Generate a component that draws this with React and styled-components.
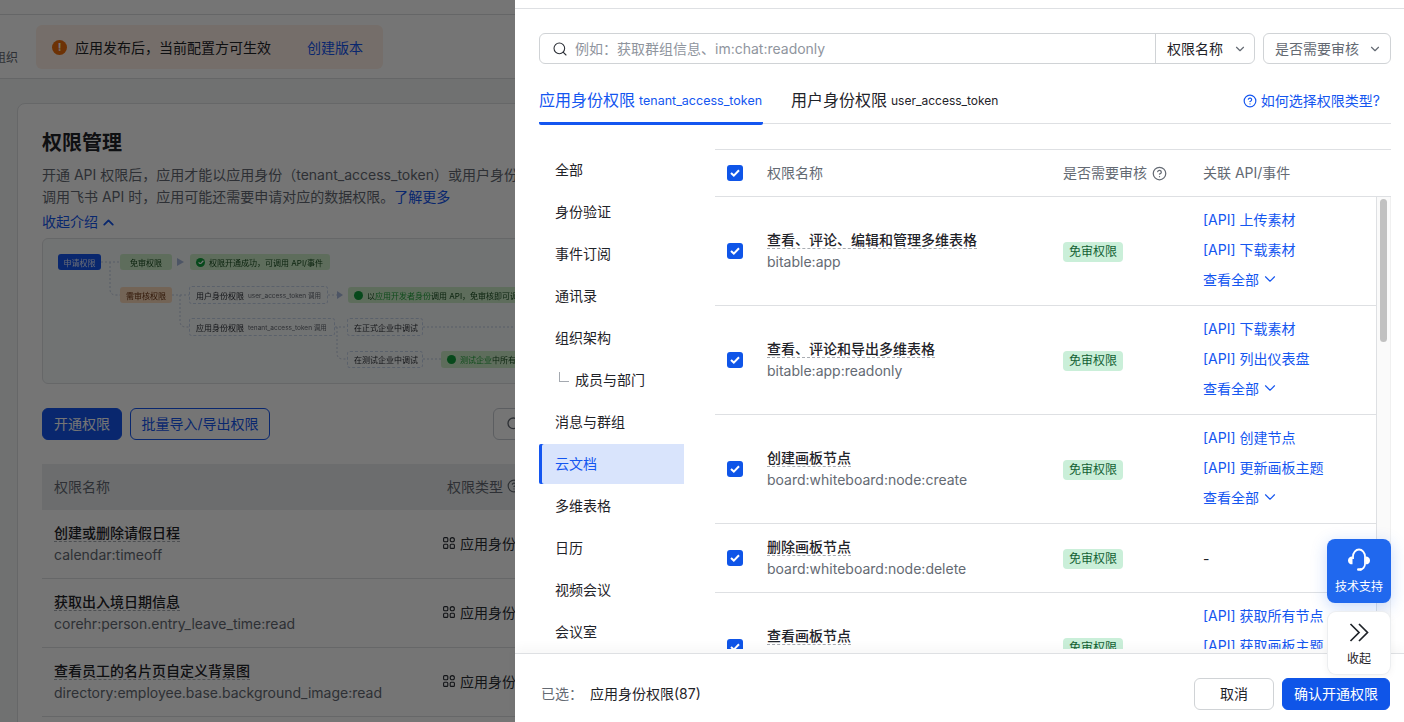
import React from 'react';
import styled, { createGlobalStyle } from 'styled-components';
import { Search, ChevronDown, ChevronUp, CircleHelp } from 'lucide-react';

const GlobalStyle = createGlobalStyle`
  html, body {
    margin: 0;
    padding: 0;
    height: 100%;
    overflow: hidden;
    background: #fff;
  }
  body {
    font-family: Inter, "Noto Sans CJK SC", sans-serif;
    color: #1f2329;
    font-size: 14px;
  }
  * { box-sizing: border-box; }
`;

const Screen = styled.div`
  position: relative;
  width: 1404px;
  height: 722px;
  overflow: hidden;
`;

/* page behind the drawer */
const BackPage = styled.div`
  width: 1404px;
  height: 722px;
  background: #f4f6f6;
  overflow: hidden;
`;

const TopStrip = styled.div`
  height: 15px;
  background: #fff;
  border-bottom: 1px solid #dcdee0;
`;

const SubHeader = styled.div`
  height: 64px;
  background: #fff;
  border-bottom: 1px solid #dcdee0;
  display: flex;
  align-items: flex-start;
  padding-top: 10px;
`;

const OrgLabel = styled.span`
  width: 24px;
  flex: none;
  margin-top: 24px;
  margin-left: -6px;
  font-size: 12px;
  line-height: 18px;
  color: #646a73;
  white-space: nowrap;
`;

const Banner = styled.div`
  margin-left: 18px;
  width: 347px;
  height: 44px;
  border-radius: 6px;
  background: #fef0e6;
  display: flex;
  align-items: center;
  padding-left: 16px;
  gap: 8px;
`;

const WarnDot = styled.span`
  width: 15px;
  height: 15px;
  border-radius: 50%;
  background: #ed6d0c;
  color: #fff;
  font-size: 11px;
  font-weight: 700;
  line-height: 15px;
  text-align: center;
`;

const BannerLink = styled.a`
  margin-left: 28px;
  color: #1456f0;
`;

const Card = styled.div`
  margin: 24px 17px 0;
  height: 640px;
  background: #fff;
  border: 1px solid #dee0e3;
  border-radius: 8px;
  padding: 25px 24px 0;
`;

const PageTitle = styled.h1`
  margin: 0;
  font-size: 20px;
  line-height: 28px;
  font-weight: 600;
`;

const Intro = styled.p`
  margin: 7px 0 0;
  line-height: 22px;
  color: #646a73;
  white-space: nowrap;
`;

const TextLink = styled.a`
  color: #1456f0;
`;

const Collapse = styled.a`
  margin-top: 2px;
  display: flex;
  align-items: center;
  gap: 2px;
  line-height: 24px;
  color: #1456f0;
`;

const Diagram = styled.div`
  position: relative;
  height: 146px;
  margin-top: 4px;
  background: #f7fafa;
  border: 1px solid #dee0e3;
  border-radius: 6px;
  overflow: hidden;
  filter: blur(0.35px);
`;

const Wires = styled.svg`
  position: absolute;
  left: 0;
  top: 0;
`;

const Node = styled.div`
  position: absolute;
  left: ${(p) => p.$x}px;
  top: ${(p) => p.$y}px;
  width: ${(p) => p.$w}px;
  height: ${(p) => p.$h}px;
  display: flex;
  align-items: center;
  gap: 4px;
  justify-content: ${(p) => (p.$center ? 'center' : 'flex-start')};
  padding-left: ${(p) => (p.$center ? 0 : 6)}px;
  font-size: 8px;
  white-space: nowrap;
  border-radius: 3px;
  ${(p) => p.$kind === 'blue' && 'background:#1456f0;color:#dfe8ff;'}
  ${(p) => p.$kind === 'green' && 'background:#cdeec9;color:#174c1e;'}
  ${(p) => p.$kind === 'orange' && 'background:#fbd9bc;color:#6b3410;'}
  ${(p) => p.$kind === 'line' && 'border:1px dashed #c5d3ea;color:#2b2f36;'}
`;

const NodeHint = styled.span`
  font-size: 6.5px;
  color: #646a73;
`;

const NodeGreen = styled.span`
  color: #22a33b;
`;

const NodeDot = styled.span`
  width: 9px;
  height: 9px;
  flex: none;
  border-radius: 50%;
  background: #10a03c;
  display: flex;
  align-items: center;
  justify-content: center;
`;

const ActionRow = styled.div`
  display: flex;
  align-items: center;
  gap: 8px;
  margin-top: 24px;
`;

const BackButton = styled.div`
  height: 32px;
  padding: 0 ${(p) => (p.$solid ? 11 : 10.5)}px 2px;
  display: flex;
  align-items: center;
  border-radius: 6px;
  border: 1px solid #1456f0;
  color: ${(p) => (p.$solid ? '#fff' : '#1456f0')};
  background: ${(p) => (p.$solid ? '#1456f0' : 'transparent')};
`;

const BackSearch = styled.div`
  margin-left: 215px;
  width: 260px;
  height: 32px;
  border: 1px solid #c9cdd4;
  border-radius: 6px;
  display: flex;
  align-items: center;
  padding-left: 12px;
`;

const BackTable = styled.div`
  margin-top: 24px;
`;

const BackHead = styled.div`
  display: grid;
  grid-template-columns: 393px 1fr;
  height: 46px;
  padding: 0 0 2px 12px;
  align-items: center;
  background: #eceef0;
  color: #646a73;
`;

const BackHeadType = styled.span`
  display: flex;
  align-items: center;
  gap: 4px;
`;

const BackRow = styled.div`
  display: grid;
  grid-template-columns: 389px 1fr;
  height: 69px;
  padding-left: 12px;
  align-items: center;
  border-bottom: 1px solid #dee0e3;
`;

const BackType = styled.span`
  display: flex;
  align-items: center;
  gap: 5px;
  padding-bottom: 2px;
  color: #2b2f36;
  white-space: nowrap;
`;

/* dim layer */
const Mask = styled.div`
  position: absolute;
  inset: 0;
  background: rgba(0, 0, 0, 0.54);
`;

/* drawer */
const Drawer = styled.aside`
  position: absolute;
  top: 0;
  right: 0;
  bottom: 0;
  width: 889px;
  background: #fff;
  display: flex;
  flex-direction: column;
`;

const DrawerTop = styled.div`
  height: 9px;
  flex: none;
  border-bottom: 1px solid #dee0e3;
`;

const DrawerInner = styled.div`
  flex: 1;
  min-height: 0;
  padding: 24px 13px 0 24px;
  display: flex;
  flex-direction: column;
`;

const SearchRow = styled.div`
  display: flex;
  gap: 8px;
  height: 31px;
  flex: none;
`;

const SearchGroup = styled.div`
  width: 716px;
  display: flex;
  border: 1px solid #d0d3d6;
  border-radius: 6px;
`;

const SearchField = styled.div`
  flex: 1;
  display: flex;
  align-items: center;
  gap: 7px;
  padding: 0 0 2px 12px;
  color: #8f959e;
  border-right: 1px solid #d0d3d6;
  svg { color: #2b2f36; margin-top: 2px; }
`;

const FieldPick = styled.div`
  width: 98px;
  flex: none;
  display: flex;
  align-items: center;
  padding: 0 0 2px 11px;
  gap: 10px;
  color: #1f2329;
  svg { margin-top: 2px; }
`;

const ReviewPick = styled.div`
  width: 128px;
  display: flex;
  align-items: center;
  padding: 0 0 2px 11px;
  gap: 9px;
  color: #646a73;
  border: 1px solid #d0d3d6;
  border-radius: 6px;
  svg { margin-top: 2px; }
`;

const TabBar = styled.div`
  height: 39px;
  flex: none;
  margin-top: 21px;
  display: flex;
  gap: 28px;
  border-bottom: 1px solid #dee0e3;
`;

const Tab = styled.div`
  height: 40px;
  display: flex;
  align-items: flex-start;
  gap: 4px;
  padding-top: 3px;
  font-size: 16px;
  line-height: 24px;
  white-space: nowrap;
  color: ${(p) => (p.$active ? '#1456f0' : '#1f2329')};
  ${(p) => p.$active && 'width: 224px; border-bottom: 3px solid #1456f0; border-radius: 0 0 2px 2px;'}
`;

const TabToken = styled.span`
  font-size: ${(p) => (p.$wide ? 12.5 : 12)}px;
  line-height: 26px;
`;

const HelpLink = styled.a`
  margin-left: auto;
  margin-right: 11px;
  padding-top: 5px;
  display: flex;
  align-items: flex-start;
  gap: 4px;
  color: #1456f0;
  font-size: 14px;
  line-height: 22px;
  svg { margin-top: 4px; }
`;

const Content = styled.div`
  margin-top: 25px;
  height: 500px;
  flex: none;
  display: flex;
  gap: 31px;
`;

const Nav = styled.nav`
  width: 145px;
  flex: none;
  padding-top: 1px;
  display: flex;
  flex-direction: column;
  gap: 2px;
  overflow: hidden;
`;

const NavItem = styled.div`
  height: 40px;
  flex: none;
  display: flex;
  align-items: center;
  gap: 6px;
  padding-left: ${(p) => (p.$sub ? 20 : 16)}px;
  padding-bottom: 2px;
  color: ${(p) => (p.$active ? '#1456f0' : '#1f2329')};
  background: ${(p) => (p.$active ? '#d9e4fc' : 'transparent')};
  box-shadow: ${(p) => (p.$active ? 'inset 3px 0 0 #1456f0' : 'none')};
  border-radius: ${(p) => (p.$active ? '2px 0 0 2px' : '0')};
`;

const TreeMark = styled.span`
  width: 10px;
  height: 10px;
  margin-bottom: 4px;
  border-left: 1.5px solid #a4a9b0;
  border-bottom: 1.5px solid #a4a9b0;
`;

const Table = styled.div`
  flex: 1;
  min-width: 0;
  display: flex;
  flex-direction: column;
`;

const cols = '52px 296px 140px 1fr';

const TableHead = styled.div`
  height: 48px;
  flex: none;
  display: grid;
  grid-template-columns: ${cols};
  align-items: center;
  border-top: 1px solid #dee0e3;
  border-bottom: 1px solid #dee0e3;
  color: #646a73;
`;

const CheckCell = styled.div`
  padding-left: 12px;
  display: flex;
  align-items: center;
`;

const Check = styled.span`
  width: 16px;
  height: 16px;
  border-radius: 3px;
  background: #0f55e8;
  display: flex;
  align-items: center;
  justify-content: center;
`;

const HeadLabel = styled.span`
  display: flex;
  align-items: center;
  gap: 5px;
  padding-bottom: 2px;
  svg { margin-top: 2px; }
`;

const TableScroll = styled.div`
  flex: 1;
  min-height: 0;
  display: flex;
  overflow: hidden;
`;

const Rows = styled.div`
  flex: 1;
  min-width: 0;
`;

const Row = styled.div`
  display: grid;
  grid-template-columns: ${cols};
  align-items: center;
  height: ${(p) => (p.$short ? 69 : 109)}px;
  border-bottom: 1px solid #dee0e3;
`;

const NameCell = styled.div`
  display: flex;
  flex-direction: column;
  align-items: flex-start;
  padding-top: 2px;
`;

const PermName = styled.span`
  font-weight: 500;
  line-height: 17px;
  color: #1f2329;
  border-bottom: 1px dashed #a9adb3;
`;

const PermKey = styled.span`
  margin-top: 2px;
  line-height: 22px;
  color: #646a73;
`;

const Badge = styled.span`
  justify-self: start;
  width: 60px;
  height: 20px;
  margin-top: 2px;
  border-radius: 4px;
  background: #caefd9;
  color: #125f33;
  font-size: 12px;
  line-height: 20px;
  text-align: center;
`;

const ApiCell = styled.div`
  display: flex;
  flex-direction: column;
  margin-bottom: 4px;
  color: #1456f0;
`;

const ApiLink = styled.a`
  display: flex;
  align-items: center;
  gap: 2px;
  height: 30px;
  color: #1456f0;
  white-space: nowrap;
`;

const Track = styled.div`
  width: 15px;
  flex: none;
  padding: 2px 3px 0;
  background: #fafafa;
  border-left: 1px solid #dee0e3;
  border-right: 1px solid #f0f0f0;
`;

const Thumb = styled.div`
  height: 143px;
  border-radius: 4px;
  background: #c1c1c1;
`;

const Footer = styled.div`
  position: relative;
  margin-top: 4px;
  height: 69px;
  flex: none;
  display: flex;
  align-items: center;
  padding: 10px 14px 0 26px;
  border-top: 1px solid #dee0e3;
  background: #fff;
  box-shadow: 0 -6px 10px rgba(0, 0, 0, 0.03);
`;

const SelectedLabel = styled.span`
  width: 49px;
  color: #646a73;
`;

const FooterButton = styled.button`
  height: 32px;
  padding: 0 0 2px;
  width: ${(p) => (p.$primary ? 108 : 80)}px;
  margin-top: 2px;
  margin-left: ${(p) => (p.$primary ? '8px' : 'auto')};
  border-radius: 6px;
  font: inherit;
  border: 1px solid ${(p) => (p.$primary ? '#0f55e8' : '#d0d3d6')};
  background: ${(p) => (p.$primary ? '#0f55e8' : '#fff')};
  color: ${(p) => (p.$primary ? '#fff' : '#1f2329')};
`;

const FloatStack = styled.div`
  position: absolute;
  right: 13px;
  top: 539px;
  display: flex;
  flex-direction: column;
  align-items: center;
  gap: 9px;
`;

const FloatButton = styled.div`
  width: ${(p) => (p.$blue ? 64 : 62)}px;
  height: ${(p) => (p.$blue ? 64 : 62)}px;
  border-radius: 8px;
  display: flex;
  flex-direction: column;
  align-items: center;
  padding-top: ${(p) => (p.$blue ? 9 : 8)}px;
  gap: 7px;
  font-size: 12px;
  line-height: 16px;
  background: ${(p) => (p.$blue ? '#2068ee' : '#fff')};
  color: ${(p) => (p.$blue ? '#fff' : '#1f2329')};
  box-shadow: ${(p) =>
    p.$blue ? '0 4px 16px rgba(32, 104, 238, 0.25)' : '0 0 0 1px #eceef0, 0 2px 8px rgba(0, 0, 0, 0.06)'};
`;

const HeadsetIcon = () => (
  <svg width="24" height="24" viewBox="0 0 24 24" fill="none">
    <path d="M6 11V8.5a6 7 0 0 1 12 0V16c0 3-2.2 5.5-5 5.5" stroke="#fff" strokeWidth="1.8" />
    <path d="M5.5 8.5v7.8A3.9 3.9 0 0 1 1 12.4a3.9 3.9 0 0 1 4.5-3.9z" fill="#fff" />
    <path d="M18.5 8.5v7.8A3.9 3.9 0 0 0 23 12.4a3.9 3.9 0 0 0-4.5-3.9z" fill="#fff" />
    <rect x="10" y="20.2" width="5" height="2.6" rx="1.3" fill="#fff" />
  </svg>
);

const DoubleChevron = () => (
  <svg width="24" height="24" viewBox="0 0 24 24" fill="none" stroke="#1f2329" strokeWidth="1.7">
    <path d="M3.5 4l8.5 8.5L3.5 21" />
    <path d="M12 4l8.5 8.5L12 21" />
  </svg>
);

const Tick = ({ size = 10 }) => (
  <svg width={size} height={size * 0.8} viewBox="0 0 10 8" fill="none" stroke="#fff" strokeWidth="2">
    <path d="M1 4l2.8 2.6L9 1.2" />
  </svg>
);

const AppIcon = () => (
  <svg width="12" height="12" viewBox="0 0 12 12" fill="none" stroke="#2b2f36" strokeWidth="1.1">
    <rect x="0.6" y="0.6" width="4.2" height="4.2" rx="1" />
    <rect x="7.2" y="0.6" width="4.2" height="4.2" rx="2.1" />
    <rect x="0.6" y="7.2" width="4.2" height="4.2" rx="1" />
    <rect x="7.2" y="7.2" width="4.2" height="4.2" rx="1" />
  </svg>
);

const backRows = [
  ['创建或删除请假日程', 'calendar:timeoff'],
  ['获取出入境日期信息', 'corehr:person.entry_leave_time:read'],
  ['查看员工的名片页自定义背景图', 'directory:employee.base.background_image:read'],
];

const navItems = ['全部', '身份验证', '事件订阅', '通讯录', '组织架构', '成员与部门', '消息与群组', '云文档', '多维表格', '日历', '视频会议', '会议室'];

const rows = [
  { name: '查看、评论、编辑和管理多维表格', key: 'bitable:app', apis: ['上传素材', '下载素材'] },
  { name: '查看、评论和导出多维表格', key: 'bitable:app:readonly', apis: ['下载素材', '列出仪表盘'] },
  { name: '创建画板节点', key: 'board:whiteboard:node:create', apis: ['创建节点', '更新画板主题'] },
  { name: '删除画板节点', key: 'board:whiteboard:node:delete', apis: [] },
  { name: '查看画板节点', key: 'board:whiteboard:node:read', apis: ['获取所有节点', '获取画板主题'] },
];

const wireProps = { fill: 'none', stroke: '#bfcbe0', strokeDasharray: '2 2' };

const FlowDiagram = () => (
  <Diagram>
    <Wires width="1300" height="146">
      <path d="M58 23H77" {...wireProps} />
      <path d="M67 23V50q0 6 6 6H77" {...wireProps} />
      <path d="M129 56H146" {...wireProps} />
      <path d="M137 56V82q0 6 6 6H146" {...wireProps} />
      <path d="M285 56H294" {...wireProps} />
      <path d="M292 88H304" {...wireProps} />
      <path d="M294 88V114q0 6 6 6H304" {...wireProps} />
      <path d="M380 88H1200" {...wireProps} />
      <path d="M380 120H398" {...wireProps} />
      <path d="M134 19l7 4-7 4z" fill="#a8b9dc" />
      <path d="M294 52l6 4-6 4z" fill="#a8b9dc" />
    </Wires>
    <Node $x={15} $y={15} $w={43} $h={16} $center $kind="blue">申请权限</Node>
    <Node $x={77} $y={15} $w={52} $h={16} $center $kind="green">免审权限</Node>
    <Node $x={147} $y={15} $w={140} $h={16} $kind="green"><NodeDot><Tick size={6} /></NodeDot><span>权限开通成功，可调用 API/事件</span></Node>
    <Node $x={77} $y={48} $w={52} $h={16} $center $kind="orange">需审核权限</Node>
    <Node $x={146} $y={47} $w={139} $h={18} $kind="line"><span>用户身份权限</span><NodeHint>user_access_token 调用</NodeHint></Node>
    <Node $x={305} $y={48} $w={300} $h={16} $kind="green"><NodeDot /><span>以<NodeGreen>应用开发者身份</NodeGreen>调用 API，免审核即可调试</span></Node>
    <Node $x={146} $y={79} $w={146} $h={18} $kind="line"><span>应用身份权限</span><NodeHint>tenant_access_token 调用</NodeHint></Node>
    <Node $x={304} $y={79} $w={76} $h={18} $kind="line">在正式企业中调试</Node>
    <Node $x={304} $y={112} $w={76} $h={17} $kind="line">在测试企业中调试</Node>
    <Node $x={398} $y={112} $w={300} $h={17} $kind="green"><NodeDot /><span><NodeGreen>测试企业</NodeGreen>中所有成员可调试</span></Node>
  </Diagram>
);

const Background = () => (
  <BackPage>
    <TopStrip />
    <SubHeader>
      <OrgLabel>组织</OrgLabel>
      <Banner>
        <WarnDot>!</WarnDot>
        应用发布后，当前配置方可生效
        <BannerLink>创建版本</BannerLink>
      </Banner>
    </SubHeader>
    <Card>
      <PageTitle>权限管理</PageTitle>
      <Intro>
        开通 API 权限后，应用才能以应用身份（tenant_access_token）或用户身份（user_access_token）调用对应的 API。
        <br />
        调用飞书 API 时，应用可能还需要申请对应的数据权限。<TextLink>了解更多</TextLink>
      </Intro>
      <Collapse>收起介绍 <ChevronUp size={17} strokeWidth={2.6} /></Collapse>
      <FlowDiagram />
      <ActionRow>
        <BackButton $solid>开通权限</BackButton>
        <BackButton>批量导入/导出权限</BackButton>
        <BackSearch><Search size={16} color="#646a73" /></BackSearch>
      </ActionRow>
      <BackTable>
        <BackHead>
          <span>权限名称</span>
          <BackHeadType>权限类型 <CircleHelp size={14} /></BackHeadType>
        </BackHead>
        {backRows.map(([name, key]) => (
          <BackRow key={key}>
            <NameCell>
              <PermName>{name}</PermName>
              <PermKey>{key}</PermKey>
            </NameCell>
            <BackType><AppIcon />应用身份权限</BackType>
          </BackRow>
        ))}
      </BackTable>
    </Card>
  </BackPage>
);

export default function App() {
  return (
    <Screen>
      <GlobalStyle />
      <Background />
      <Mask />
      <Drawer>
        <DrawerTop />
        <DrawerInner>
          <SearchRow>
            <SearchGroup>
              <SearchField>
                <Search size={16} strokeWidth={1.6} />
                例如：获取群组信息、im:chat:readonly
              </SearchField>
              <FieldPick>权限名称 <ChevronDown size={14} color="#646a73" /></FieldPick>
            </SearchGroup>
            <ReviewPick>是否需要审核 <ChevronDown size={14} color="#646a73" /></ReviewPick>
          </SearchRow>
          <TabBar>
            <Tab $active>应用身份权限 <TabToken $wide>tenant_access_token</TabToken></Tab>
            <Tab>用户身份权限 <TabToken>user_access_token</TabToken></Tab>
            <HelpLink><CircleHelp size={14} />如何选择权限类型?</HelpLink>
          </TabBar>
          <Content>
            <Nav>
              {navItems.map((item) => (
                <NavItem key={item} $active={item === '云文档'} $sub={item === '成员与部门'}>
                  {item === '成员与部门' && <TreeMark />}
                  {item}
                </NavItem>
              ))}
            </Nav>
            <Table>
              <TableHead>
                <CheckCell><Check><Tick /></Check></CheckCell>
                <HeadLabel>权限名称</HeadLabel>
                <HeadLabel>是否需要审核 <CircleHelp size={15} /></HeadLabel>
                <HeadLabel>关联 API/事件</HeadLabel>
              </TableHead>
              <TableScroll>
                <Rows>
                  {rows.map((row) => (
                    <Row key={row.key} $short={row.apis.length === 0}>
                      <CheckCell><Check><Tick /></Check></CheckCell>
                      <NameCell>
                        <PermName>{row.name}</PermName>
                        <PermKey>{row.key}</PermKey>
                      </NameCell>
                      <Badge>免审权限</Badge>
                      {row.apis.length === 0 ? (
                        <span>-</span>
                      ) : (
                        <ApiCell>
                          {row.apis.map((api) => (
                            <ApiLink key={api}>[API] {api}</ApiLink>
                          ))}
                          <ApiLink>查看全部 <ChevronDown size={18} strokeWidth={1.5} /></ApiLink>
                        </ApiCell>
                      )}
                    </Row>
                  ))}
                </Rows>
                <Track><Thumb /></Track>
              </TableScroll>
            </Table>
          </Content>
        </DrawerInner>
        <Footer>
          <SelectedLabel>已选：</SelectedLabel>
          应用身份权限(87)
          <FooterButton>取消</FooterButton>
          <FooterButton $primary>确认开通权限</FooterButton>
        </Footer>
      </Drawer>
      <FloatStack>
        <FloatButton $blue><HeadsetIcon />技术支持</FloatButton>
        <FloatButton><DoubleChevron />收起</FloatButton>
      </FloatStack>
    </Screen>
  );
}
